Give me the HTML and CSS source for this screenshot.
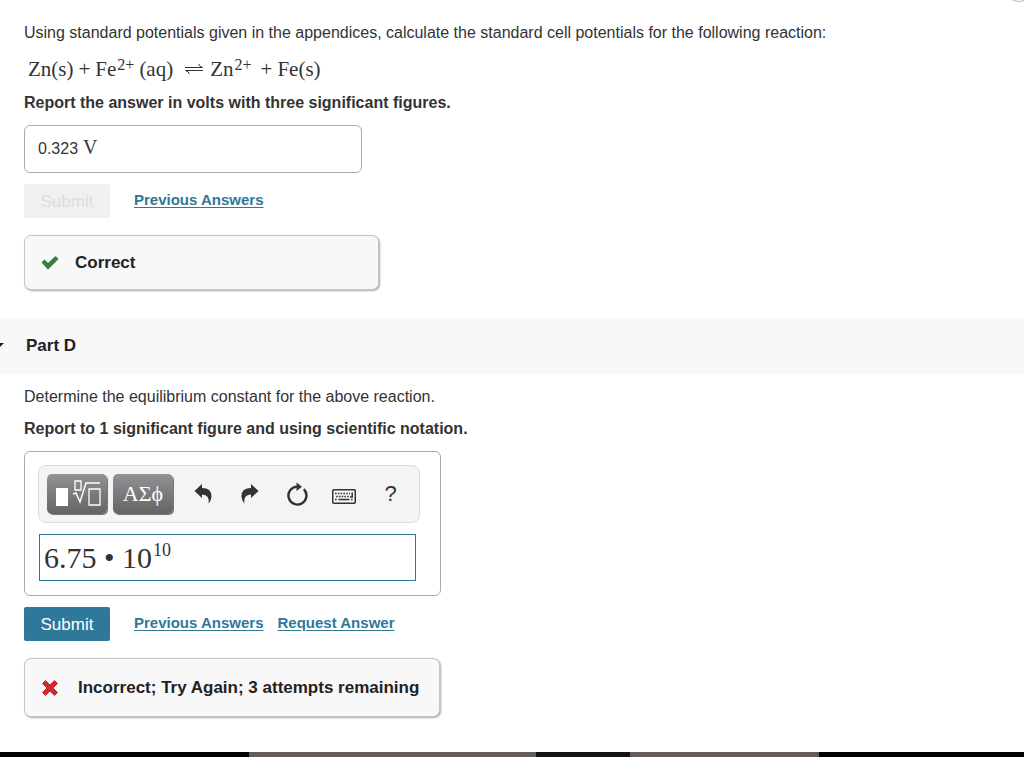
FILE: index.html
```html
<!DOCTYPE html>
<html lang="en">
<head>
    <meta charset="UTF-8">
    <meta name="viewport" content="width=device-width, initial-scale=1.0">
    <title>Cell Potentials</title>
    <link rel="stylesheet" href="styles.css">
</head>
<body>
    <div class="corner-circle"></div>

    <main class="main-content">
        <section class="part">
            <p class="question">Using standard potentials given in the appendices, calculate the standard cell potentials for the following reaction:</p>
            <div class="equation">
                <span>Zn(s)</span>
                <span>+</span>
                <span>Fe<sup>2+</sup></span>
                <span>(aq)</span>
                <svg class="equilibrium" viewBox="0 0 20 12" role="img" aria-label="equilibrium">
                    <path d="M1 4.500H18.500Q15.500 3.500 14.500 1M19 7.500H1.500Q4.500 8.500 5.500 11" fill="none" stroke="#333" stroke-width="1"/>
                </svg>
                <span>Zn<sup>2+</sup></span>
                <span class="wide-plus">+</span>
                <span>Fe(s)</span>
            </div>
            <p class="instruction">Report the answer in volts with three significant figures.</p>

            <div class="answer-box">
                <input type="text" class="answer-value" id="voltage" value="0.323" aria-label="Cell potential" readonly>
                <label class="unit" for="voltage">V</label>
            </div>

            <div class="actions">
                <button type="button" class="submit-btn" disabled>Submit</button>
                <a href="#" class="action-link">Previous Answers</a>
            </div>

            <div class="feedback feedback-correct">
                <svg class="feedback-icon" viewBox="0 0 18 18" aria-hidden="true">
                    <path d="M1.500 8.500L3.500 6.500L7 10L14.500 3L16.500 5L7 14.500Z" fill="#36803f" stroke="#36803f" stroke-width="1.600" stroke-linejoin="round"/>
                </svg>
                <span>Correct</span>
            </div>
        </section>

        <header class="part-header">
            <svg class="part-arrow" viewBox="0 0 12 6" aria-hidden="true">
                <path d="M0 0H12L6 6Z" fill="#222"/>
            </svg>
            <h2 class="part-title">Part D</h2>
        </header>

        <section class="part">
            <p class="question">Determine the equilibrium constant for the above reaction.</p>
            <p class="instruction">Report to 1 significant figure and using scientific notation.</p>

            <div class="editor">
                <div class="toolbar">
                    <button type="button" class="palette-btn" aria-label="Templates">
                        <svg width="50" height="30" viewBox="0 0 50 30" aria-hidden="true">
                            <path d="M4 9H16V27H4Z" fill="#fff"/>
                            <path d="M23 2H29V11H23ZM37 10H48V26H37Z" fill="none" stroke="#fff" stroke-width="1.300"/>
                            <path d="M21 15L24 14L28 23L34 4H48" fill="none" stroke="#fff" stroke-width="1.500"/>
                        </svg>
                    </button>
                    <button type="button" class="palette-btn">ΑΣϕ</button>
                    <button type="button" class="tool-btn tool-undo" aria-label="Undo">
                        <svg width="18" height="20" viewBox="0 0 18 20" aria-hidden="true">
                            <path d="M0.500 7L8 0V4Q18 4 17.500 13Q17 17 14.500 19.500Q16 11 8 10.500V14Z" fill="#333"/>
                        </svg>
                    </button>
                    <button type="button" class="tool-btn" aria-label="Redo">
                        <svg width="18" height="20" viewBox="0 0 18 20" aria-hidden="true">
                            <path d="M17.500 7L10 0V4Q0 4 0.500 13Q1 17 3.500 19.500Q2 11 10 10.500V14Z" fill="#333"/>
                        </svg>
                    </button>
                    <button type="button" class="tool-btn" aria-label="Reset">
                        <svg width="22" height="24" viewBox="0 0 22 24" aria-hidden="true">
                            <path d="M17.800 7.200A9 9 0 1 1 11 4.600" fill="none" stroke="#333" stroke-width="2.400"/>
                            <path d="M10.500 0.500L16 4.800L10.500 9Z" fill="#333"/>
                        </svg>
                    </button>
                    <button type="button" class="tool-btn" aria-label="Keyboard shortcuts">
                        <svg class="keyboard-icon" width="24" height="15" viewBox="0 0 24 15" aria-hidden="true">
                            <rect x="0.750" y="0.750" width="22.500" height="13.500" rx="1" fill="none" stroke="#333" stroke-width="1.500"/>
                            <path d="M3 4.500H18M4 7.500H18M3 10.500H5M19 10.500H21" stroke="#333" stroke-width="1.500" stroke-dasharray="1.600 1.200"/>
                            <path d="M6.500 10.500H17.500M20.200 3.500V8H18" fill="none" stroke="#333" stroke-width="1.500"/>
                        </svg>
                    </button>
                    <button type="button" class="tool-btn" aria-label="Help">?</button>
                </div>
                <!-- editable div, since the value needs a real exponent -->
                <div class="math-input" role="textbox" contenteditable="true" spellcheck="false" aria-label="Equilibrium constant">6.75 • 10<sup>10</sup></div>
            </div>

            <div class="actions">
                <button type="button" class="submit-btn">Submit</button>
                <a href="#" class="action-link">Previous Answers</a>
                <a href="#" class="action-link">Request Answer</a>
            </div>

            <div class="feedback feedback-incorrect">
                <svg class="feedback-icon" viewBox="0 0 18 18" aria-hidden="true">
                    <path d="M4.500 1.500L9 6L13.500 1.500L16.500 4.500L12 9L16.500 13.500L13.500 16.500L9 12L4.500 16.500L1.500 13.500L6 9L1.500 4.500Z" fill="#cf2a30" stroke="#cf2a30" stroke-linejoin="round"/>
                </svg>
                <span>Incorrect; Try Again; 3 attempts remaining</span>
            </div>
        </section>
    </main>

    <footer class="bottom-strip"></footer>
</body>
</html>
```
FILE: styles.css
```css
/* Base styles */
* {
    margin: 0;
    padding: 0;
    box-sizing: border-box;
}

body {
    display: flex;
    flex-direction: column;
    min-height: 100vh;
    background-color: #fff;
    color: #333;
    font-family: 'Liberation Sans', Arial, sans-serif;
    font-size: 16px;
    line-height: 20px;
    overflow-x: hidden;
}

button,
input {
    font-family: inherit;
    font-size: inherit;
    color: inherit;
}

.corner-circle {
    position: absolute;
    top: -28px;
    right: -10px;
    width: 30px;
    height: 30px;
    border: 1px solid #bbb;
    border-radius: 50%;
}

.main-content {
    flex: 1;
}

.part {
    padding: 0 24px;
}

.part:first-child {
    padding-top: 23px;
}

/* Question text */
.equation {
    display: flex;
    align-items: center;
    gap: 5px;
    margin: 14px 0 12px 4px;
    font-family: 'Liberation Serif', 'Times New Roman', serif;
    font-size: 21px;
    line-height: 24px;
}

.equation sup {
    margin-left: 1px;
    font-size: 16px;
    line-height: 0;
    vertical-align: 6px;
}

.equilibrium {
    width: 20px;
    height: 12px;
    margin: 0 1px 0 6px;
}

.wide-plus {
    margin-left: 4px;
}

.instruction {
    margin-bottom: 12px;
    font-weight: 700;
}

.question + .instruction {
    margin-top: 12px;
}

/* Submitted answer */
.answer-box {
    display: flex;
    align-items: center;
    width: 100%;
    max-width: 338px;
    height: 48px;
    padding: 0 13px;
    border: 1px solid #aaa;
    border-radius: 6px;
}

.answer-value {
    width: 45px;
    border: none;
    outline: none;
    background: transparent;
}

.unit {
    padding-bottom: 4px;
    font-family: 'Liberation Serif', 'Times New Roman', serif;
    font-size: 20px;
}

.actions {
    display: flex;
    align-items: center;
    gap: 14px;
    margin-top: 11px;
}

.submit-btn {
    width: 86px;
    height: 34px;
    margin-right: 10px;
    padding-top: 2px;
    background: #2f7899;
    color: #fff;
    border: none;
    border-radius: 2px;
    font-size: 17px;
    cursor: pointer;
}

.submit-btn:disabled {
    background: #f0f0f0;
    color: #ddd;
    cursor: default;
}

.action-link {
    padding-bottom: 2px;
    color: #2f7899;
    font-size: 15px;
    font-weight: 700;
    text-underline-offset: 2px;
}

.feedback {
    display: flex;
    align-items: center;
    gap: 16px;
    width: fit-content;
    margin-top: 17px;
    padding: 0 16px;
    background: #f8f8f8;
    color: #222;
    border: 1px solid #c4c4c4;
    border-radius: 7px;
    box-shadow: 1px 1px 2px #aaa;
    font-size: 17px;
    font-weight: 700;
}

.feedback-correct {
    width: 100%;
    max-width: 355px;
    height: 55px;
}

.feedback-incorrect {
    gap: 19px;
    height: 59px;
    padding-right: 20px;
}

.feedback-icon {
    width: 18px;
    height: 18px;
}

/* Part heading */
.part-header {
    display: flex;
    align-items: center;
    height: 56px;
    margin: 28px 0 13px;
    background: #f8f8f8;
}

.part-arrow {
    width: 12px;
    height: 6px;
    margin: 0 22px 0 -8px;
}

.part-title {
    color: #222;
    font-size: 17px;
    font-weight: 700;
}

/* Equation editor */
.editor {
    width: 100%;
    max-width: 417px;
    padding: 13px 20px 14px 13px;
    border: 1px solid #aaa;
    border-radius: 6px;
}

.toolbar {
    display: flex;
    align-items: center;
    gap: 6px;
    height: 58px;
    margin-bottom: 11px;
    padding: 0 8px;
    background: #f4f4f4;
    border: 1px solid #ddd;
    border-radius: 8px;
}

.palette-btn {
    display: flex;
    align-items: center;
    justify-content: center;
    width: 60px;
    height: 40px;
    background: linear-gradient(#929297, #646464);
    color: #fff;
    border: none;
    border-radius: 5px;
    box-shadow: 1px 1px 0 #777;
    font-family: 'Liberation Serif', 'Times New Roman', serif;
    font-size: 22px;
    cursor: pointer;
}

.tool-btn {
    display: flex;
    align-items: center;
    justify-content: center;
    width: 41px;
    height: 40px;
    background: transparent;
    border: none;
    font-size: 22px;
    cursor: pointer;
}

.tool-undo {
    margin-left: 3px;
}

.keyboard-icon {
    margin-top: 4px;
}

.math-input {
    height: 47px;
    margin: 0 4px 0 1px;
    padding: 0 4px;
    border: 1px solid #2f7899;
    outline: none;
    font-family: 'Liberation Serif', 'Times New Roman', serif;
    font-size: 30px;
    line-height: 45px;
    white-space: nowrap;
}

.math-input sup {
    margin-left: 1px;
    font-size: 18px;
    line-height: 0;
    vertical-align: 12px;
}

.bottom-strip {
    height: 5px;
    background: linear-gradient(90deg, #000 24.3%, #655c59 24.3%, #655c59 52.3%, #121212 52.3%, #121212 61.5%, #655c59 61.5%, #655c59 80%, #000 80%);
}
```
